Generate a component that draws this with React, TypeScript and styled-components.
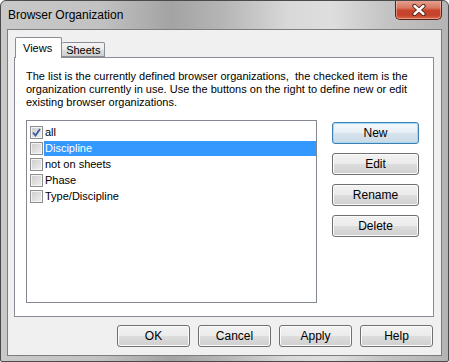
import React from 'react';
import styled, { createGlobalStyle } from 'styled-components';

const GlobalStyle = createGlobalStyle`
  html, body {
    margin: 0;
    padding: 0;
    background: #ffffff;
  }
  body {
    font-family: 'Liberation Sans', Arial, sans-serif;
    font-size: 11px;
    color: #000000;
  }
`;

const Window = styled.div`
  box-sizing: border-box;
  width: 449px;
  height: 362px;
  display: flex;
  flex-direction: column;
  border: 1px solid #4a4a4a;
  border-radius: 6px 6px 2px 2px;
  background: linear-gradient(
    to right,
    #c9c9c9 0%,
    #c2c2c2 22%,
    #a3a3a3 38%,
    #b6b6b6 50%,
    #d8d8d8 64%,
    #dedede 74%,
    #c4c4c4 86%,
    #b4b4b4 100%
  );
  overflow: hidden;
`;

const TitleBar = styled.div`
  height: 28px;
  display: flex;
  align-items: flex-start;
  padding-left: 7px;
`;

const Title = styled.span`
  margin-top: 7px;
  font-size: 12px;
  color: #000000;
  white-space: nowrap;
`;

const CloseButton = styled.div`
  margin-left: auto;
  margin-right: 6px;
  margin-top: -1px;
  width: 47px;
  height: 20px;
  box-sizing: border-box;
  border: 1px solid #5b2318;
  border-top: none;
  border-radius: 0 0 5px 5px;
  background: linear-gradient(
    to bottom,
    #e6a694 0%,
    #d87a63 40%,
    #c8452c 55%,
    #c5432a 80%,
    #d9694f 100%
  );
  box-shadow: inset 0 0 0 1px rgba(255, 220, 210, 0.45);
  display: flex;
  align-items: center;
  justify-content: center;
`;

const Client = styled.div`
  flex: 1;
  margin: 0 6px 5px 6px;
  border: 1px solid #7d7d7d;
  background: #f0f0f0;
  display: flex;
  flex-direction: column;
  padding: 7px 7px 0 6px;
`;

const TabStrip = styled.div`
  height: 20px;
  display: flex;
  align-items: flex-end;
  padding-left: 1px;
`;

const Tab = styled.div<{ $active?: boolean }>`
  box-sizing: border-box;
  position: relative;
  z-index: ${p => (p.$active ? 1 : 0)};
  height: ${p => (p.$active ? '21px' : '15px')};
  margin-bottom: ${p => (p.$active ? '-1px' : '0')};
  padding: ${p => (p.$active ? '4px 9px 0 7px' : '0 4px 0 4px')};
  border: 1px solid #898c95;
  border-bottom: ${p => (p.$active ? 'none' : '1px solid #898c95')};
  border-left: ${p => (p.$active ? '1px solid #898c95' : 'none')};
  border-radius: 2px 2px 0 0;
  background: ${p =>
    p.$active
      ? '#ffffff'
      : 'linear-gradient(to bottom, #f4f4f4 0%, #ebebeb 50%, #dddddd 51%, #cfcfcf 100%)'};
  display: flex;
  align-items: ${p => (p.$active ? 'flex-start' : 'center')};
  white-space: nowrap;
`;

const TabPanel = styled.div`
  flex: 1;
  box-sizing: border-box;
  background: #ffffff;
  border: 1px solid #898c95;
  padding: 12px 14px 0 11px;
  display: flex;
  flex-direction: column;
`;

const Description = styled.p`
  margin: 0;
  line-height: 13px;
  white-space: nowrap;
`;

const Body = styled.div`
  display: flex;
  gap: 15px;
  margin-top: 11px;
`;

const ListBox = styled.div`
  box-sizing: border-box;
  width: 291px;
  height: 183px;
  border: 1px solid #828790;
  background: #ffffff;
  padding: 3px 0 0 3px;
  display: flex;
  flex-direction: column;
`;

const Row = styled.div`
  height: 16px;
  display: flex;
  align-items: center;
  gap: 1px;
`;

const Check = styled.span`
  box-sizing: border-box;
  width: 13px;
  height: 13px;
  flex: none;
  border: 1px solid #8e8f8f;
  background: linear-gradient(135deg, #cbcbcb 0%, #dedede 50%, #f2f2f2 100%);
  box-shadow: inset 0 0 0 1px #f4f4f4;
  display: flex;
  align-items: center;
  justify-content: center;
`;

const Label = styled.span<{ $selected?: boolean }>`
  flex: 1;
  height: 15px;
  line-height: 15px;
  padding-left: 1px;
  background: ${p => (p.$selected ? '#3399ff' : 'transparent')};
  color: ${p => (p.$selected ? '#ffffff' : '#000000')};
  white-space: nowrap;
`;

const ButtonColumn = styled.div`
  display: flex;
  flex-direction: column;
  gap: 9px;
  padding-top: 2px;
`;

const Button = styled.button<{ $default?: boolean; $w: number }>`
  box-sizing: border-box;
  width: ${p => p.$w}px;
  height: 22px;
  padding: 0;
  font-family: 'Liberation Sans', Arial, sans-serif;
  font-size: 12px;
  color: #000000;
  border: 1px solid ${p => (p.$default ? '#3c7fb1' : '#707070')};
  border-radius: 3px;
  background: ${p =>
    p.$default
      ? 'linear-gradient(to bottom, #f3f8fb 0%, #e6eff5 50%, #d6e3ec 51%, #cadbe6 100%)'
      : 'linear-gradient(to bottom, #f2f2f2 0%, #ebebeb 50%, #dddddd 51%, #cfcfcf 100%)'};
  box-shadow: inset 0 0 0 1px ${p => (p.$default ? '#a7d9f5' : '#fbfbfb')};
`;

const Footer = styled.div`
  height: 38px;
  display: flex;
  justify-content: flex-end;
  align-items: flex-start;
  gap: 8px;
  padding: 8px 1px 0 0;
  box-sizing: border-box;
`;

const CloseGlyph = () => (
  <svg width="16" height="12" viewBox="0 0 16 12">
    <path d="M3.5 2 L12.5 10 M12.5 2 L3.5 10" stroke="#4a1b12" strokeWidth="4.2" strokeLinecap="round" />
    <path d="M3.5 2 L12.5 10 M12.5 2 L3.5 10" stroke="#ffffff" strokeWidth="2.4" strokeLinecap="round" />
  </svg>
);

const CheckGlyph = () => (
  <svg width="9" height="9" viewBox="0 0 9 9">
    <path d="M1 4.5 L3.5 7.5 L8 1" stroke="#3e5a9b" strokeWidth="1.8" fill="none" />
  </svg>
);

const items = [
  { name: 'all', checked: true },
  { name: 'Discipline', selected: true },
  { name: 'not on sheets' },
  { name: 'Phase' },
  { name: 'Type/Discipline' },
];

const App = () => {
  return (
    <>
      <GlobalStyle />
      <Window>
        <TitleBar>
          <Title>Browser Organization</Title>
          <CloseButton>
            <CloseGlyph />
          </CloseButton>
        </TitleBar>
        <Client>
          <TabStrip>
            <Tab $active>Views</Tab>
            <Tab>Sheets</Tab>
          </TabStrip>
          <TabPanel>
            <Description>
              The list is the currently defined browser organizations,&nbsp; the checked item is the
              <br />
              organization currently in use. Use the buttons on the right to define new or edit
              <br />
              existing browser organizations.
            </Description>
            <Body>
              <ListBox>
                {items.map(item => (
                  <Row key={item.name}>
                    <Check>{item.checked ? <CheckGlyph /> : null}</Check>
                    <Label $selected={item.selected}>{item.name}</Label>
                  </Row>
                ))}
              </ListBox>
              <ButtonColumn>
                <Button $w={87} $default>New</Button>
                <Button $w={87}>Edit</Button>
                <Button $w={87}>Rename</Button>
                <Button $w={87}>Delete</Button>
              </ButtonColumn>
            </Body>
          </TabPanel>
          <Footer>
            <Button $w={73}>OK</Button>
            <Button $w={73}>Cancel</Button>
            <Button $w={73}>Apply</Button>
            <Button $w={73}>Help</Button>
          </Footer>
        </Client>
      </Window>
    </>
  );
};

export default App;
